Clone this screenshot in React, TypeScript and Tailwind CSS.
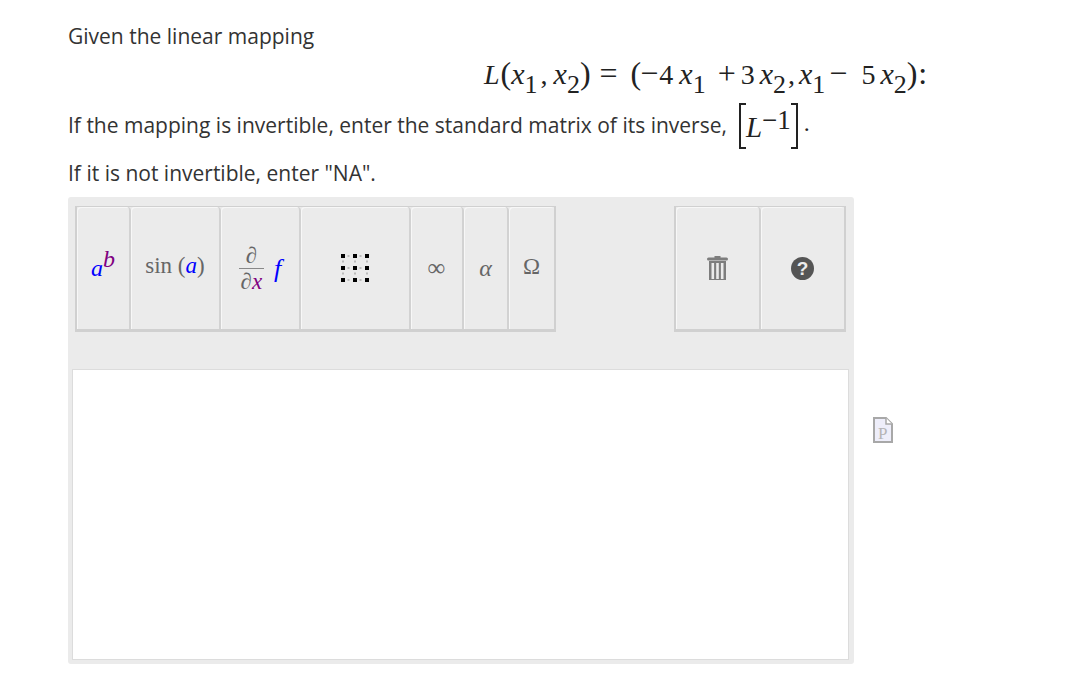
// Question page with a math palette and an empty answer box
import type { ReactNode } from "react"

const mathFont = "[font-family:'Liberation_Serif',serif]"

// one palette button, width comes from the caller
function ToolButton({ width, children }: { width: string; children: ReactNode }) {
  return (
    <div className={`${width} flex h-full items-center justify-center rounded-t-[4px] border-r-2 border-[#d2d2d2] shadow-[inset_1px_1px_0_#f7f7f7] last:border-r-0`}>
      {children}
    </div>
  )
}

function ToolGroup({ children }: { children: ReactNode }) {
  return <div className="flex h-[126px] border-2 border-t border-[#d0d0d0] border-b-[3px]">{children}</div>
}

function Sub({ children }: { children: ReactNode }) {
  return <sub className="relative top-[9px] align-baseline text-[26px] not-italic leading-none">{children}</sub>
}

function X({ n }: { n: number }) {
  return (
    <span className="whitespace-nowrap">
      <i className="text-[30px]">x</i>
      <Sub>{n}</Sub>
    </span>
  )
}

// operators and brackets are drawn a bit larger than the letters
function Op({ children, className }: { children: ReactNode; className?: string }) {
  return <span className={`text-[32px] ${className ?? ""}`}>{children}</span>
}

function MatrixIcon() {
  const big = [0, 12, 24]
  return (
    <svg width="30" height="30" viewBox="0 0 30 30">
      {big.map((y) => big.map((x) => <rect key={`${x}-${y}`} x={x + 1} y={y + 1} width="4" height="4" fill="#000" />))}
      {big.map((y) => [6.5, 18.5].map((x) => <rect key={`h${x}-${y}`} x={x + 1} y={y + 2} width="2" height="2" fill="#bbb" />))}
      {[6.5, 18.5].map((y) => big.map((x) => <rect key={`v${x}-${y}`} x={x + 2} y={y + 1} width="2" height="2" fill="#bbb" />))}
    </svg>
  )
}

function TrashIcon() {
  return (
    <svg width="21" height="24" viewBox="0 0 21 24" fill="#7d7d7d">
      <rect x="0" y="1.5" width="21" height="3" rx="1.5" />
      <rect x="7.5" y="0" width="6" height="2" />
      <path d="M2 5h17v19H2z" />
      <rect x="4.5" y="7" width="2.6" height="16" fill="#ebebeb" />
      <rect x="9.2" y="7" width="2.6" height="16" fill="#ebebeb" />
      <rect x="13.9" y="7" width="2.6" height="16" fill="#ebebeb" />
    </svg>
  )
}

function HelpIcon() {
  return (
    <div className="flex h-[23px] w-[23px] items-center justify-center rounded-full bg-[#555] font-['Liberation_Sans',sans-serif] text-[19px] font-bold leading-none text-[#ebebeb]">
      ?
    </div>
  )
}

function FileIcon() {
  return (
    <svg width="20" height="26" viewBox="0 0 20 26" className="mb-[2px]">
      <path d="M1 1h12l6 6v18H1z" fill="#eeeefa" stroke="#a8a8a8" strokeWidth="2" />
      <path d="M13 1v6h6" fill="#fff" stroke="#a8a8a8" strokeWidth="1.5" />
      <text x="5" y="22" fontFamily="Liberation Serif" fontSize="17" fill="#b5b5b5">P</text>
    </svg>
  )
}

export default function App() {
  return (
    <div className="h-[680px] w-[1079px] overflow-hidden bg-white pl-[68px] font-['Open_Sans',sans-serif] text-[21px] text-[#333]">
      {/* 题目文字 */}
      <p className="pt-[22px] leading-[28px]">Given the linear mapping</p>
      <div className={`${mathFont} mt-[12px] flex h-[34px] items-center whitespace-nowrap pb-[12px] pl-[416px] text-[28px] leading-none text-[#222]`}>
        <span className="flex items-baseline">
          <i>L</i>
          <Op className="ml-[1px]">(</Op>
          <X n={1} />
          <span className="ml-[3px] mr-[6px]">,</span>
          <X n={2} />
          <Op>)</Op>
          <Op className="ml-[9px] mr-[13px]">=</Op>
          <Op>(</Op>
          <Op className="-ml-[1px]">−</Op>
          <span className="ml-[1px]">4</span>
          <span className="ml-[6px]"><X n={1} /></span>
          <Op className="ml-[12px] mr-[5px]">+</Op>
          3
          <span className="ml-[5px]"><X n={2} /></span>
          <span className="ml-[2px] mr-[4px]">,</span>
          <X n={1} />
          <Op className="ml-[4px] mr-[14px]">−</Op>
          5
          <span className="ml-[5px]"><X n={2} /></span>
          <Op>)</Op>
          <Op className="ml-[1px]">:</Op>
        </span>
      </div>
      <div className="mt-[5px] flex h-[50px] items-center">
        <span>If the mapping is invertible, enter the standard matrix of its inverse,</span>
        <span className={`${mathFont} ml-[12px] flex items-center text-[#222]`}>
          <span className="h-[46px] w-[7px] border-y-2 border-l-2 border-[#222]" />
          <span className="mt-[2px] text-[29px] italic leading-none">L</span>
          <span className="mb-[12px] text-[27px] leading-none">−1</span>
          <span className="h-[46px] w-[7px] border-y-2 border-r-2 border-[#222]" />
          <span className="mb-[6px] ml-[6px] text-[24px] leading-none">.</span>
        </span>
      </div>
      <p className="mt-[8px] leading-[28px]">If it is not invertible, enter "NA".</p>

      {/* 输入面板 + 右侧文件图标 */}
      <div className="mt-[10px] flex items-center">
        <div className="h-[467px] w-[786px] rounded-[3px] bg-[#ebebeb] pl-[4px] pr-[5px] pt-[9px]">
          <div className="flex justify-between px-[3px]">
            <ToolGroup>
              <ToolButton width="w-[54px]">
                <span className={`${mathFont} text-[24px] italic`}>
                  <span className="text-[#00f]">a</span>
                  <span className="relative -top-[9px] text-[#800080]">b</span>
                </span>
              </ToolButton>
              <ToolButton width="w-[90px]">
                <span className={`${mathFont} mb-[4px] text-[23px] text-[#666]`}>
                  sin (<i className="text-[#00f]">a</i>)
                </span>
              </ToolButton>
              <ToolButton width="w-[80px]">
                <span className={`${mathFont} flex items-center gap-[10px] text-[23px]`}>
                  <span className="flex flex-col items-center leading-[25px] text-[#666]">
                    <span className="border-b border-[#888] px-[7px]">∂</span>
                    <span>∂<i className="text-[#800080]">x</i></span>
                  </span>
                  <i className="text-[26px] text-[#00f]">f</i>
                </span>
              </ToolButton>
              <ToolButton width="w-[110px]">
                <MatrixIcon />
              </ToolButton>
              <ToolButton width="w-[53px]">
                <span className={`${mathFont} text-[25px] text-[#666]`}>∞</span>
              </ToolButton>
              <ToolButton width="w-[45px]">
                <i className={`${mathFont} text-[24px] text-[#666]`}>α</i>
              </ToolButton>
              <ToolButton width="w-[45px]">
                <span className={`${mathFont} mb-[2px] text-[23px] text-[#666]`}>Ω</span>
              </ToolButton>
            </ToolGroup>
            <ToolGroup>
              <ToolButton width="w-[85px]">
                <TrashIcon />
              </ToolButton>
              <ToolButton width="w-[83px]">
                <HelpIcon />
              </ToolButton>
            </ToolGroup>
          </div>
          <div className="mt-[37px] h-[291px] border border-[#dcdcdc] bg-white" />
        </div>
        <div className="ml-[19px]">
          <FileIcon />
        </div>
      </div>
    </div>
  )
}
